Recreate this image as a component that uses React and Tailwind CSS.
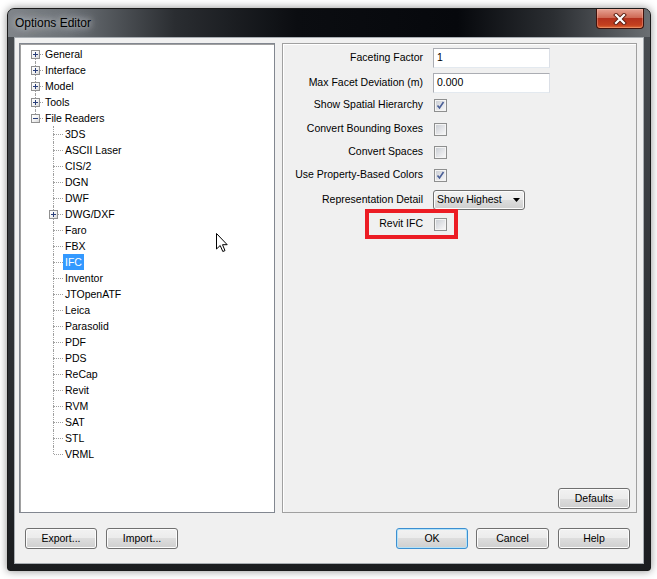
import React from "react";

const LINE = "border-[#a0a0a0] border-dotted";

function ExpBox({ open, className = "" }) {
  return (
    <div
      className={`absolute h-[9px] w-[9px] border border-[#919191] bg-[linear-gradient(135deg,#ffffff_0%,#f4f4f4_50%,#d8d8d8_100%)] ${className}`}
    >
      <div className="absolute left-[1px] top-[3px] h-px w-[5px] bg-[#2a3f7a]" />
      {!open && <div className="absolute left-[3px] top-[1px] h-[5px] w-px bg-[#2a3f7a]" />}
    </div>
  );
}

function TopRow({ label, open, first, last }) {
  return (
    <div className="flex h-4 items-center">
      <div className="relative ml-[5px] h-4 w-[17px] shrink-0">
        {!first && <div className={`absolute left-[9px] top-0 h-2 border-l ${LINE}`} />}
        {!last && <div className={`absolute left-[9px] top-2 h-2 border-l ${LINE}`} />}
        <div className={`absolute left-[13px] top-2 w-[4px] border-t ${LINE}`} />
        <ExpBox open={open} className="left-[5px] top-[4px]" />
      </div>
      <span className="px-[2px] leading-4">{label}</span>
    </div>
  );
}

function ChildRow({ label, last, exp, selected }) {
  return (
    <div className="flex h-4 items-center">
      <div className="relative ml-[23px] h-4 w-[19px] shrink-0">
        <div className={`absolute left-[9px] top-0 h-2 border-l ${LINE}`} />
        {!last && <div className={`absolute left-[9px] top-2 h-2 border-l ${LINE}`} />}
        <div className={`absolute left-[10px] top-2 w-[9px] border-t ${LINE}`} />
        {exp && <ExpBox open={false} className="left-[5px] top-[4px]" />}
      </div>
      <span
        className={`px-[2px] leading-4 ${selected ? "bg-[#3399ff] text-white" : ""}`}
      >
        {label}
      </span>
    </div>
  );
}

function Check({ checked }) {
  return (
    <div className="h-[13px] w-[13px] border border-[#8e8f8f] bg-[#f4f4f4] p-px">
      <div className="relative h-full w-full bg-[linear-gradient(135deg,#cbcfd5_0%,#e6e7ea_60%,#f6f6f6_100%)]">
        {checked && (
          <svg viewBox="0 0 9 9" className="absolute left-0 top-0 h-[9px] w-[9px]">
            <path d="M1.5 4.5 L3.5 7 L7.5 1" fill="none" stroke="#4a5f97" strokeWidth="1.6" />
          </svg>
        )}
      </div>
    </div>
  );
}

function Btn({ children, w = "w-[72px]", def = false }) {
  return (
    <div
      className={`flex h-[21px] ${w} items-center justify-center rounded-[3px] border ${
        def
          ? "border-[#3c8fd1] shadow-[inset_0_0_0_1px_#b4e2f8]"
          : "border-[#707070] shadow-[inset_0_0_0_1px_#fcfcfc]"
      } bg-[linear-gradient(#f2f2f2_0%,#ebebeb_50%,#dddddd_50%,#cfcfcf_100%)] text-black`}
    >
      {children}
    </div>
  );
}

function Row({ label, mt, children, extra }) {
  return (
    <div className={`relative flex h-[20px] items-center ${mt}`}>
      <div className="w-[139px] shrink-0 text-right">{label}</div>
      {children}
      {extra}
    </div>
  );
}

export default function App() {
  const children = [
    "3DS", "ASCII Laser", "CIS/2", "DGN", "DWF", "DWG/DXF", "Faro", "FBX", "IFC",
    "Inventor", "JTOpenATF", "Leica", "Parasolid", "PDF", "PDS", "ReCap", "Revit",
    "RVM", "SAT", "STL", "VRML",
  ];
  return (
    <div className="h-[579px] w-[657px] overflow-hidden bg-white pl-[7px] pt-[8px] font-['Liberation_Sans',Arial,sans-serif] text-[10.5px] text-black">
      <div className="flex h-[563px] w-[644px] flex-col rounded-t-[7px] rounded-b-[3px] border border-[#1a1a1a] bg-[linear-gradient(180deg,#4a4e53_0%,#2e3135_60%,#1b1d20_100%)] shadow-[0_0_8px_rgba(0,0,0,0.45)]">
        {/* title bar */}
        <div className="flex h-[28px] shrink-0 items-start justify-between rounded-t-[6px] bg-[linear-gradient(90deg,#80858a_0%,#6a6f74_10%,#2a2d31_26%,#0b0d11_45%,#06080c_70%,#2b2e32_85%,#6b6f73_100%)]">
          <div className="ml-[7px] mt-[6px] text-[12px] leading-[16px] text-black [text-shadow:0_0_6px_#c8ccd0,0_0_10px_#c8ccd0]">
            Options Editor
          </div>
          <div className="mr-[6px] flex h-[20px] w-[48px] items-center justify-center rounded-b-[4px] border border-t-0 border-[#3f120c] bg-[linear-gradient(180deg,#e7a293_0%,#cf6a55_45%,#b4321e_50%,#c4401f_85%,#e0703a_100%)] shadow-[inset_0_0_0_1px_rgba(255,200,180,0.35)]">
            <svg viewBox="0 0 14 12" className="h-[12px] w-[14px]">
              <path d="M3 2 L11 10 M11 2 L3 10" stroke="#5a1c10" strokeWidth="4" strokeLinecap="square" />
              <path d="M3 2 L11 10 M11 2 L3 10" stroke="#ffffff" strokeWidth="2.2" strokeLinecap="square" />
            </svg>
          </div>
        </div>

        {/* client */}
        <div className="mx-[6px] mb-[6px] flex flex-1 flex-col border border-[#a8adb2] bg-[#f0f0f0] pl-[4px] pt-[5px]">
          <div className="flex h-[470px] gap-[7px]">
            {/* tree */}
            <div className="relative w-[256px] border border-[#828790] bg-white pl-px pt-[2px] shadow-[inset_1px_1px_0_#a0a0a0]">
              <TopRow label="General" first />
              <TopRow label="Interface" />
              <TopRow label="Model" />
              <TopRow label="Tools" />
              <TopRow label="File Readers" open last />
              {children.map((c, i) => (
                <ChildRow
                  key={c}
                  label={c}
                  last={i === children.length - 1}
                  exp={c === "DWG/DXF"}
                  selected={c === "IFC"}
                />
              ))}
              <svg
                viewBox="0 0 12 20"
                className="absolute left-[196px] top-[189px] h-[20px] w-[12px]"
              >
                <path
                  d="M0.5 0.5 L0.5 16 L4.2 12.5 L6.8 18.5 L9 17.6 L6.5 11.7 L11.2 11.7 Z"
                  fill="#ffffff"
                  stroke="#000000"
                  strokeWidth="1"
                  strokeLinejoin="miter"
                />
              </svg>
            </div>

            {/* options panel */}
            <div className="flex w-[355px] flex-col border border-[#a0a0a0] shadow-[inset_1px_1px_0_#ffffff] pl-px pt-px">
              <Row label="Faceting Factor" mt="mt-[3px]">
                <div className="ml-[10px] flex h-[20px] w-[117px] items-center border border-[#abadb3] border-b-[#e3e9ef] border-r-[#dbdfe6] bg-white pl-[3px]">
                  1
                </div>
              </Row>
              <Row label="Max Facet Deviation (m)" mt="mt-[5px]">
                <div className="ml-[10px] flex h-[20px] w-[117px] items-center border border-[#abadb3] border-b-[#e3e9ef] border-r-[#dbdfe6] bg-white pl-[3px]">
                  0.000
                </div>
              </Row>
              <Row label="Show Spatial Hierarchy" mt="mt-[2px]">
                <div className="ml-[11px]">
                  <Check checked />
                </div>
              </Row>
              <Row label="Convert Bounding Boxes" mt="mt-[4px]">
                <div className="ml-[11px]">
                  <Check />
                </div>
              </Row>
              <Row label="Convert Spaces" mt="mt-[3px]">
                <div className="ml-[11px]">
                  <Check />
                </div>
              </Row>
              <Row label="Use Property-Based Colors" mt="mt-[3px]">
                <div className="ml-[11px]">
                  <Check checked />
                </div>
              </Row>
              <Row label="Representation Detail" mt="mt-[5px]">
                <div className="ml-[10px] flex h-[20px] w-[92px] items-center justify-between rounded-[3px] border border-[#707070] bg-[linear-gradient(#f2f2f2_0%,#ebebeb_50%,#dddddd_50%,#cfcfcf_100%)] pl-[3px] pr-[4px] shadow-[inset_0_0_0_1px_#fcfcfc]">
                  <span>Show Highest</span>
                  <svg viewBox="0 0 7 4" className="h-[4px] w-[7px]">
                    <path d="M0 0 L7 0 L3.5 4 Z" fill="#000" />
                  </svg>
                </div>
              </Row>
              <Row
                label="Revit IFC"
                mt="mt-[4px]"
                extra={
                  <div className="absolute left-[81px] top-[-5px] h-[30px] w-[93px] border-[4px] border-[#ec1c24]" />
                }
              >
                <div className="ml-[11px]">
                  <Check />
                </div>
              </Row>
              <div className="mt-auto flex justify-end pb-[3px] pr-[6px]">
                <Btn w="w-[72px]">Defaults</Btn>
              </div>
            </div>
          </div>

          {/* bottom buttons */}
          <div className="mt-[15px] flex items-center pl-[6px] pr-[13px]">
            <Btn>Export...</Btn>
            <div className="ml-[9px]">
              <Btn>Import...</Btn>
            </div>
            <div className="ml-auto flex gap-[8px]">
              <Btn def>OK</Btn>
              <Btn w="w-[73px]">Cancel</Btn>
              <div className="ml-px">
                <Btn>Help</Btn>
              </div>
            </div>
          </div>
        </div>
      </div>
    </div>
  );
}
